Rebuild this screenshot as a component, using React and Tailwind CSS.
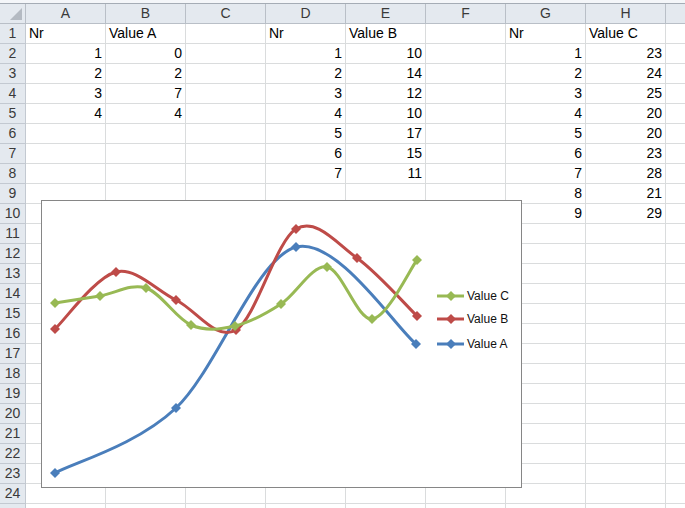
const cols = ['A', 'B', 'C', 'D', 'E', 'F', 'G', 'H'];

const sheet = {
  1: { A: 'Nr', B: 'Value A', D: 'Nr', E: 'Value B', G: 'Nr', H: 'Value C' },
  2: { A: 1, B: 0, D: 1, E: 10, G: 1, H: 23 },
  3: { A: 2, B: 2, D: 2, E: 14, G: 2, H: 24 },
  4: { A: 3, B: 7, D: 3, E: 12, G: 3, H: 25 },
  5: { A: 4, B: 4, D: 4, E: 10, G: 4, H: 20 },
  6: { D: 5, E: 17, G: 5, H: 20 },
  7: { D: 6, E: 15, G: 6, H: 23 },
  8: { D: 7, E: 11, G: 7, H: 28 },
  9: { G: 8, H: 21 },
  10: { G: 9, H: 29 },
};

// chart points in page coordinates
const series = [
  { name: 'Value A', color: '#4a7ebb', legendY: 344, pts: [[55, 473], [176, 408], [296, 247], [416, 344]] },
  { name: 'Value B', color: '#be4b48', legendY: 319, pts: [[55, 329], [116, 272], [176, 300], [236, 330], [296, 229], [357, 258], [417, 316]] },
  { name: 'Value C', color: '#98b954', legendY: 296, pts: [[55, 303], [100, 296], [146, 288], [191, 325], [235, 326], [281, 304], [327, 267], [372, 319], [417, 260]] },
];

const smooth = (pts) => {
  let d = `M${pts[0][0]},${pts[0][1]}`;
  for (let i = 0; i < pts.length - 1; i++) {
    const p0 = pts[i - 1] || pts[i];
    const p1 = pts[i];
    const p2 = pts[i + 1];
    const p3 = pts[i + 2] || p2;
    const c1 = [p1[0] + (p2[0] - p0[0]) / 6, p1[1] + (p2[1] - p0[1]) / 6];
    const c2 = [p2[0] - (p3[0] - p1[0]) / 6, p2[1] - (p3[1] - p1[1]) / 6];
    d += ` C${c1[0]},${c1[1]} ${c2[0]},${c2[1]} ${p2[0]},${p2[1]}`;
  }
  return d;
};

const Diamond = ({ x, y, color }) => (
  <polygon points={`${x},${y - 5} ${x + 5},${y} ${x},${y + 5} ${x - 5},${y}`} fill={color} />
);

const Chart = () => (
  <div className="absolute left-[41px] top-[200px] w-[481px] h-[288px] border border-[#868686] bg-white">
    <svg width="479" height="286" className="block">
      <g transform="translate(-42,-201)">
        {series.map((s) => (
          <g key={s.name}>
            <path d={smooth(s.pts)} fill="none" stroke={s.color} strokeWidth="3" strokeLinejoin="round" strokeLinecap="round" />
            {s.pts.map(([x, y], i) => (
              <Diamond key={i} x={x} y={y} color={s.color} />
            ))}
          </g>
        ))}
        {series.map((s) => (
          <g key={s.name + '-legend'}>
            <line x1="437" x2="464" y1={s.legendY} y2={s.legendY} stroke={s.color} strokeWidth="3" />
            <Diamond x={451} y={s.legendY} color={s.color} />
            <text x="467" y={s.legendY + 4} fontSize="12" fill="#111" fontFamily="Liberation Sans, Arial, sans-serif">
              {s.name}
            </text>
          </g>
        ))}
      </g>
    </svg>
  </div>
);

const Cell = ({ value }) => {
  const isNum = typeof value === 'number';
  return (
    <div
      className={`h-[20px] border-r border-b border-[#dadcdd] px-[3px] flex items-center text-[14px] text-black whitespace-nowrap overflow-hidden ${
        isNum ? 'justify-end' : 'justify-start'
      }`}
    >
      {value}
    </div>
  );
};

export default function App() {
  const rows = Array.from({ length: 24 }, (_, i) => i + 1);

  return (
    <div className="relative w-[685px] h-[508px] overflow-hidden bg-white font-['Liberation_Sans',Arial,sans-serif]">
      <div className="h-[4px] bg-[#f4f6f9] border-b border-[#a5acb5]" />
      <div className="grid grid-cols-[26px_repeat(8,80px)_1fr]">
        {/* column headers */}
        <div className="relative h-[20px] bg-[#e4e9ef] border-r border-b border-[#b9bfc7]">
          <svg width="12" height="12" className="absolute right-[3px] bottom-[3px]">
            <polygon points="12,0 12,12 0,12" fill="#b4bac2" />
          </svg>
        </div>
        {cols.map((c) => (
          <div key={c} className="h-[20px] bg-[#e4e9ef] border-r border-b border-[#b9bfc7] flex items-center justify-center text-[14px] text-[#3a3a3a]">
            {c}
          </div>
        ))}
        <div className="h-[20px] bg-[#e4e9ef] border-b border-[#b9bfc7]" />

        {rows.map((r) => (
          <div key={r} className="contents">
            <div className="h-[20px] bg-[#e4e9ef] border-r border-b border-[#c3c9d1] flex items-center justify-center text-[14px] text-[#3a3a3a]">
              {r}
            </div>
            {cols.map((c) => (
              <Cell key={c} value={sheet[r]?.[c]} />
            ))}
            <div className="h-[20px] border-b border-[#dadcdd]" />
          </div>
        ))}

        {/* partly visible row 25 */}
        <div className="h-[20px] bg-[#e4e9ef] border-r border-[#c3c9d1]" />
        {cols.map((c) => (
          <div key={c} className="h-[20px] border-r border-[#dadcdd]" />
        ))}
        <div className="h-[20px]" />
      </div>
      <Chart />
    </div>
  );
}
